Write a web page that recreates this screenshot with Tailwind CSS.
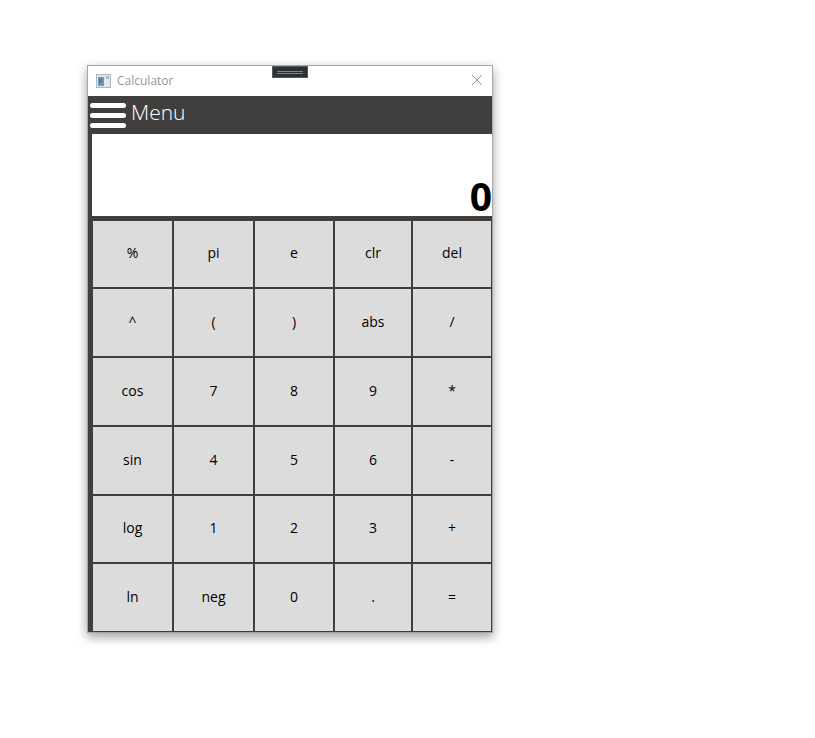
<!DOCTYPE html>
<html lang="en">
<head>
<meta charset="UTF-8">
<title>Calculator</title>
<script src="https://cdn.jsdelivr.net/npm/@tailwindcss/browser@4"></script>
</head>
<body class="min-h-screen bg-white font-['Open_Sans','Noto_Sans',sans-serif]">
  <div class="min-h-screen pt-[65px] pl-[87px]">
    <!-- window -->
    <div class="relative w-[406px] h-[568px] border border-[#a6a6a6] bg-white shadow-[0_4px_10px_rgba(0,0,0,0.38)] flex flex-col">
      <!-- title bar -->
      <div class="h-[30px] flex items-center pl-[8px] pr-[8px] bg-white">
        <svg width="16" height="16" viewBox="0 0 16 16" class="shrink-0">
          <rect x="0.5" y="1.5" width="14" height="13" fill="#e4e6e9" stroke="#b4b6b9"/>
          <rect x="2" y="4" width="6" height="9" fill="#6f97bb"/>
          <rect x="3" y="6" width="3" height="4" fill="#4a7aa6"/>
          <rect x="10" y="3" width="3" height="3" fill="#a9bccd"/>
        </svg>
        <span class="ml-[5px] text-[12px] text-[#91969b] leading-none">Calculator</span>
        <svg width="10" height="10" viewBox="0 0 10 10" class="ml-auto mr-[2px] -mt-[2px]">
          <path d="M0 0 L10 10 M10 0 L0 10" stroke="#8e9092" stroke-width="1" fill="none"/>
        </svg>
      </div>
      <!-- debug toolbar handle -->
      <div class="absolute top-0 left-[184px] w-[36px] h-[12px] bg-[#2c2f36] border border-[#55585e] flex flex-col justify-center gap-[1px] items-center">
        <div class="w-[26px] h-px bg-[#7f8288]"></div>
        <div class="w-[26px] h-px bg-[#7f8288]"></div>
      </div>
      <!-- menu bar -->
      <div class="h-[38px] bg-[#403f3d] flex items-center pl-[2px]">
        <div class="w-[36px] flex flex-col gap-[5px] mt-[1px]">
          <div class="h-[5px] rounded-full bg-white"></div>
          <div class="h-[5px] rounded-full bg-white"></div>
          <div class="h-[5px] rounded-full bg-white"></div>
        </div>
        <span class="ml-[5px] -mt-[6px] text-[21px] font-light text-white leading-none">Menu</span>
      </div>
      <!-- body -->
      <div class="flex-1 bg-[#403f3d] pl-[4px] flex flex-col">
        <div class="h-[82px] bg-white flex items-end justify-end">
          <span class="text-[39px] font-bold text-black leading-none mb-[1px]">0</span>
        </div>
        <div class="mt-[5px] pl-px grid grid-cols-[79px_79px_78px_76px_78px] grid-rows-[66px_67px_67px_67px_66px_67px] gap-x-[2px] gap-y-[2px] text-[14px] text-black">
          <button class="bg-[#dcdcdc] pb-[3px]">%</button>
          <button class="bg-[#dcdcdc] pb-[3px]">pi</button>
          <button class="bg-[#dcdcdc] pb-[3px]">e</button>
          <button class="bg-[#dcdcdc] pb-[3px]">clr</button>
          <button class="bg-[#dcdcdc] pb-[3px]">del</button>
          <button class="bg-[#dcdcdc] pb-[3px]">^</button>
          <button class="bg-[#dcdcdc] pb-[3px]">(</button>
          <button class="bg-[#dcdcdc] pb-[3px]">)</button>
          <button class="bg-[#dcdcdc] pb-[3px]">abs</button>
          <button class="bg-[#dcdcdc] pb-[3px]">/</button>
          <button class="bg-[#dcdcdc] pb-[3px]">cos</button>
          <button class="bg-[#dcdcdc] pb-[3px]">7</button>
          <button class="bg-[#dcdcdc] pb-[3px]">8</button>
          <button class="bg-[#dcdcdc] pb-[3px]">9</button>
          <button class="bg-[#dcdcdc] pb-[3px]">*</button>
          <button class="bg-[#dcdcdc] pb-[3px]">sin</button>
          <button class="bg-[#dcdcdc] pb-[3px]">4</button>
          <button class="bg-[#dcdcdc] pb-[3px]">5</button>
          <button class="bg-[#dcdcdc] pb-[3px]">6</button>
          <button class="bg-[#dcdcdc] pb-[3px]">-</button>
          <button class="bg-[#dcdcdc] pb-[3px]">log</button>
          <button class="bg-[#dcdcdc] pb-[3px]">1</button>
          <button class="bg-[#dcdcdc] pb-[3px]">2</button>
          <button class="bg-[#dcdcdc] pb-[3px]">3</button>
          <button class="bg-[#dcdcdc] pb-[3px]">+</button>
          <button class="bg-[#dcdcdc] pb-[3px]">ln</button>
          <button class="bg-[#dcdcdc] pb-[3px]">neg</button>
          <button class="bg-[#dcdcdc] pb-[3px]">0</button>
          <button class="bg-[#dcdcdc] pb-[3px]">.</button>
          <button class="bg-[#dcdcdc] pb-[3px]">=</button>
        </div>
      </div>
    </div>
  </div>
</body>
</html>
